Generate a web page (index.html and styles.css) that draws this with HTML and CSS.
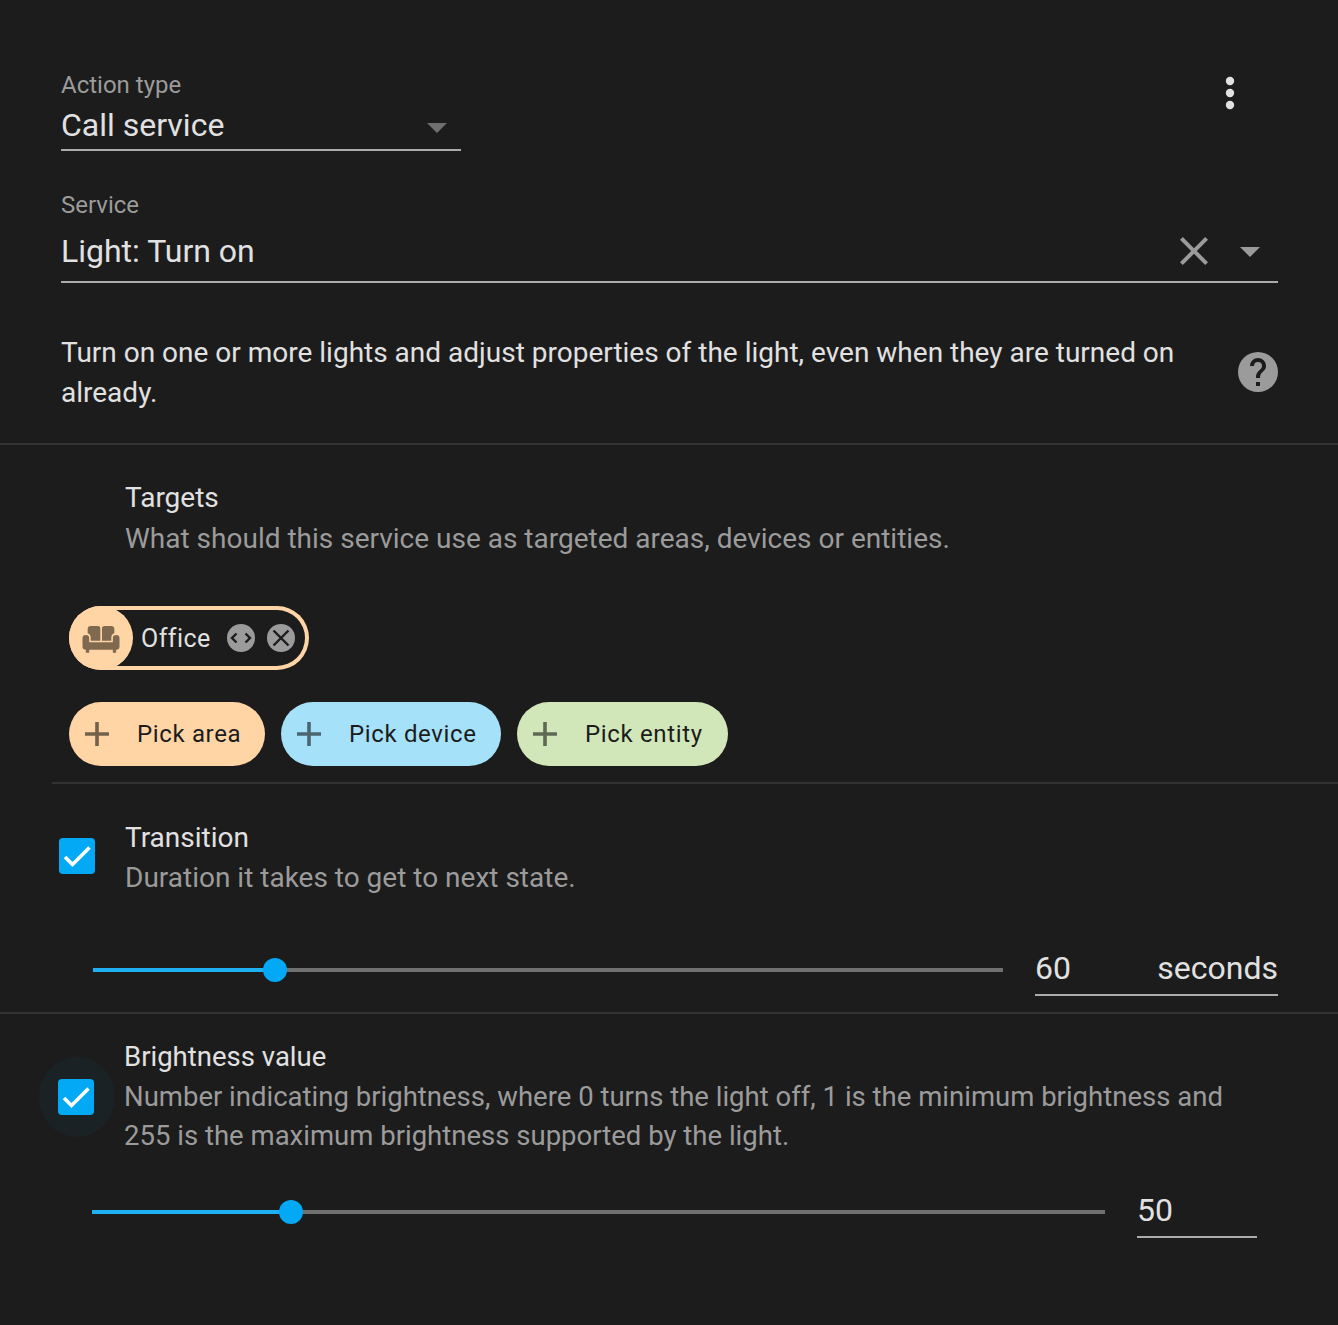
FILE: index.html
```html
<!DOCTYPE html>
<html lang="en">
  <head>
    <meta charset="utf-8">
    <title>Call service</title>
    <link rel="stylesheet" href="styles.css">
  </head>
  <body>

    <section class="action">
      <div class="action-top">
        <div class="field type-field">
          <label>Action type</label>
          <div class="field-row">
            <span class="value">Call service</span>
            <svg class="icon dim" viewBox="0 0 24 24"><path d="M7 10l5 5 5-5z"/></svg>
          </div>
        </div>
        <svg class="icon menu" viewBox="0 0 24 24"><circle cx="12" cy="6" r="2.1"/><circle cx="12" cy="12" r="2.1"/><circle cx="12" cy="18" r="2.1"/></svg>
      </div>
      <div class="field service-field">
        <label>Service</label>
        <div class="field-row">
          <span class="value">Light: Turn on</span>
          <svg class="icon" viewBox="0 0 24 24"><path d="M19 6.41L17.59 5 12 10.59 6.41 5 5 6.41 10.59 12 5 17.59 6.41 19 12 13.41 17.59 19 19 17.59 13.41 12z"/></svg>
          <svg class="icon arrow" viewBox="0 0 24 24"><path d="M7 10l5 5 5-5z"/></svg>
        </div>
      </div>
      <div class="description">
        <p>Turn on one or more lights and adjust properties of the light, even when they are turned on already.</p>
        <svg class="icon help" viewBox="0 0 24 24"><path d="M15.07 11.25l-.9.92C13.45 12.89 13 13.5 13 15h-2v-.5c0-1.11.45-2.11 1.17-2.83l1.24-1.26c.37-.36.59-.86.59-1.41a2 2 0 0 0-4 0H8a4 4 0 0 1 8 0c0 .88-.36 1.67-.93 2.25M13 19h-2v-2h2M12 2a10 10 0 1 0 0 20 10 10 0 0 0 0-20z"/></svg>
      </div>
    </section>

    <section class="targets">
      <div class="heading">
        <h3>Targets</h3>
        <p>What should this service use as targeted areas, devices or entities.</p>
      </div>
      <div class="chips">
        <div class="chip">
          <div class="chip-icon">
            <svg viewBox="0 0 24 24"><path d="M6 4.8h4a1.600 1.600 0 0 1 1.600 1.600v7.200H5.800v-2.100c0-1.300-.8-2.100-1.800-2.400V6.800a2 2 0 0 1 2-2zM14.200 4.800H18a2 2 0 0 1 2 2v2.300c-1 .3-1.800 1.100-1.800 2.400v2.100h-5.600V6.400a1.600 1.600 0 0 1 1.600-1.600zM.9 12.200a2 2 0 0 1 4 0v2.400h14.200v-2.400a2 2 0 0 1 4 0v4.900a2 2 0 0 1-2 2v1.800h-2v-1.800H4.900v1.800h-2v-1.800a2 2 0 0 1-2-2z"/></svg>
          </div>
          <span class="chip-name">Office</span>
          <svg class="round" viewBox="0 0 28 28"><circle cx="14" cy="14" r="14"/><path d="M9.500 9.500L5 14l4.500 4.500M18.500 9.500L23 14l-4.500 4.500"/></svg>
          <svg class="round" viewBox="0 0 28 28"><circle cx="14" cy="14" r="14"/><path d="M6.500 6.500l15 15M21.500 6.500l-15 15"/></svg>
        </div>
      </div>
      <div class="picks">
        <div class="pick area"><svg viewBox="0 0 24 24"><path d="M0 12h24M12 0v24"/></svg><span>Pick area</span></div>
        <div class="pick device"><svg viewBox="0 0 24 24"><path d="M0 12h24M12 0v24"/></svg><span>Pick device</span></div>
        <div class="pick entity"><svg viewBox="0 0 24 24"><path d="M0 12h24M12 0v24"/></svg><span>Pick entity</span></div>
      </div>
    </section>

    <section class="transition">
      <div class="setting-head">
        <div class="checkbox"><svg viewBox="0 0 36 36"><path d="M6 19l7.500 7.500L30.500 9.500"/></svg></div>
        <div class="heading">
          <h3>Transition</h3>
          <p>Duration it takes to get to next state.</p>
        </div>
      </div>
      <div class="setting-body">
        <div class="slider"><div class="fill" style="width: 20%"></div><div class="knob"></div></div>
        <div class="number"><span>60</span><span>seconds</span></div>
      </div>
    </section>

    <section class="brightness">
      <div class="setting-head">
        <div class="checkbox focused"><svg viewBox="0 0 36 36"><path d="M6 19l7.500 7.500L30.500 9.500"/></svg></div>
        <div class="heading">
          <h3>Brightness value</h3>
          <p>Number indicating brightness, where 0 turns the light off, 1 is the minimum brightness and 255 is the maximum brightness supported by the light.</p>
        </div>
      </div>
      <div class="setting-body">
        <div class="slider"><div class="fill" style="width: 19.6%"></div><div class="knob"></div></div>
        <div class="number"><span>50</span></div>
      </div>
    </section>

  </body>
</html>
```
FILE: styles.css
```css
* {
  box-sizing: border-box;
}
body {
  margin: 0;
  min-height: 1325px;
  background-color: #1c1c1c;
  color: #e1e1e1;
  font-family: Roboto, "Liberation Sans", sans-serif;
  font-size: 28px;
  line-height: 40px;
}
h3, p {
  margin: 0;
  font-size: inherit;
  font-weight: 400;
}
svg {
  display: block;
  flex: none;
}
.icon {
  width: 48px;
  height: 48px;
  fill: #9b9b9b;
}

/* action */
.action {
  height: 445px;
  padding: 69px 60px 0 61px;
  border-bottom: 2px solid #333;
}
.action-top {
  display: flex;
  justify-content: space-between;
}
.menu {
  fill: #e1e1e1;
  margin-right: 24px;
}
.field {
  border-bottom: 2px solid #ababab;
}
.field label {
  display: block;
  color: #9b9b9b;
  font-size: 24px;
  line-height: 32px;
}
.field-row {
  display: flex;
  align-items: center;
}
.value {
  flex: 1;
  font-size: 32px;
}
.type-field {
  width: 400px;
  height: 82px;
}
.type-field .field-row {
  height: 48px;
  margin-top: 2px;
}
.type-field .value {
  margin-top: -4px;
}
.dim {
  fill: #6f6f6f;
}
.service-field {
  height: 94px;
  margin-top: 38px;
}
.service-field .field-row {
  margin-top: 6px;
}
.arrow {
  margin: 0 4px 0 8px;
}
.description {
  display: flex;
  align-items: center;
  margin-top: 48px;
}
.description p {
  width: 1130px;
  padding-top: 2px;
}
.help {
  margin: 0 -4px 0 auto;
}

/* targets */
.targets {
  height: 339px;
  padding-top: 33px;
  position: relative;
}
.targets .heading {
  margin-left: 125px;
}
.targets .heading p {
  padding-top: 1px;
}
.heading p {
  color: #9b9b9b;
}
.targets::after {
  content: "";
  position: absolute;
  left: 52px;
  right: 0;
  bottom: 0;
  height: 2px;
  background-color: #333;
}
.chips {
  margin: 47px 0 0 69px;
}
.chip {
  display: flex;
  align-items: center;
  width: 240px;
  height: 64px;
  border-radius: 32px;
  box-shadow: inset 0 0 0 4px #ffd5a6;
}
.chip-icon {
  display: flex;
  align-items: center;
  justify-content: center;
  width: 64px;
  height: 64px;
  border-radius: 50%;
  background-color: #ffd5a6;
}
.chip-icon svg {
  width: 40px;
  height: 40px;
  fill: #7f694f;
}
.chip-name {
  width: 78px;
  margin-left: 8px;
  font-size: 25px;
  letter-spacing: .45px;
  padding-top: 1px;
}
.round {
  width: 28px;
  height: 28px;
  margin-left: 8px;
  fill: #9b9b9b;
}
.round + .round {
  margin-left: 12px;
}
.round path {
  fill: none;
  stroke: #1c1c1c;
  stroke-width: 2.400;
}
.picks {
  display: flex;
  gap: 16px;
  margin: 32px 0 0 69px;
}
.pick {
  display: flex;
  align-items: center;
  height: 64px;
  padding-left: 16px;
  border-radius: 32px;
  color: #1c1c1c;
  font-size: 24px;
  letter-spacing: .65px;
}
.pick svg {
  width: 24px;
  height: 24px;
  margin-right: 28px;
  fill: none;
  stroke: #000;
  stroke-width: 3.600;
  opacity: .54;
}
.area {
  width: 196px;
  background-color: #ffd5a6;
}
.device {
  width: 220px;
  background-color: #a5e1f9;
}
.entity {
  width: 211px;
  background-color: #d2e7b9;
}

/* settings */
.setting-head {
  display: flex;
  align-items: center;
}
.checkbox {
  flex: none;
  width: 36px;
  height: 36px;
  margin-right: 30px;
  border-radius: 4px;
  background-color: #03a9f4;
}
.checkbox path {
  fill: none;
  stroke: #fff;
  stroke-width: 3.600;
}
.focused {
  position: relative;
}
.focused::before {
  content: "";
  position: absolute;
  z-index: -1;
  left: -19px;
  top: -22px;
  width: 76px;
  height: 80px;
  border-radius: 50%;
  background-color: #1b2226;
}
.setting-body {
  display: flex;
  align-items: center;
}
.slider {
  display: flex;
  align-items: center;
  flex: 1;
  height: 4px;
  background-color: #707070;
}
.fill {
  height: 4px;
  background-color: #1fb0f2;
}
.knob {
  flex: none;
  width: 24px;
  height: 24px;
  margin-left: -12px;
  border-radius: 50%;
  background-color: #03a9f4;
}
.number {
  display: flex;
  justify-content: space-between;
  height: 52px;
  margin-left: 32px;
  border-bottom: 2px solid #ababab;
  font-size: 32px;
  line-height: 48px;
}
.transition {
  height: 230px;
  padding: 32px 60px 0 59px;
  border-bottom: 2px solid #333;
}
.transition .heading {
  padding-top: 2px;
  margin-bottom: -2px;
}
.transition .checkbox {
  margin-top: 2px;
  margin-bottom: 2px;
}
.transition .setting-body {
  margin: 48px 0 0 34px;
}
.transition .number {
  width: 243px;
}
.brightness {
  padding: 23px 81px 0 58px;
  font-size: 27.53px;
  line-height: 39.67px;
}
.brightness .setting-body {
  margin: 30px 0 0 34px;
}
.brightness .number {
  width: 120px;
}
```
